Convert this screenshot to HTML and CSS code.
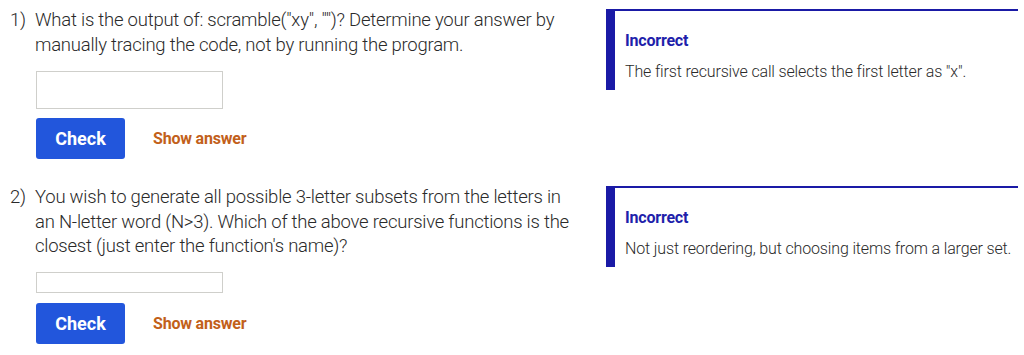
FILE: index.html
```html
<!DOCTYPE html>
<html>
<head>
<meta charset="utf-8">
<link rel="stylesheet" href="styles.css">
</head>
<body>
<div class="question q1">
  <div class="main">
    <div class="num">1)</div>
    <div class="content">
      <div class="prompt">What is the output of: scramble("xy", "")? Determine your answer by manually tracing the code, not by running the program.</div>
      <div class="answer tall"></div>
      <div class="actions">
        <button class="check">Check</button>
        <span class="show">Show answer</span>
      </div>
    </div>
  </div>
  <div class="feedback">
    <div class="fb-title">Incorrect</div>
    <div class="fb-text">The first recursive call selects the first letter as "x".</div>
  </div>
</div>
<div class="question q2">
  <div class="main">
    <div class="num">2)</div>
    <div class="content">
      <div class="prompt">You wish to generate all possible 3-letter subsets from the letters in an N-letter word (N&gt;3). Which of the above recursive functions is the closest (just enter the function's name)?</div>
      <div class="answer short"></div>
      <div class="actions">
        <button class="check">Check</button>
        <span class="show">Show answer</span>
      </div>
    </div>
  </div>
  <div class="feedback">
    <div class="fb-title">Incorrect</div>
    <div class="fb-text">Not just reordering, but choosing items from a larger set.</div>
  </div>
</div>
</body>
</html>
```

FILE: styles.css
```css
html, body {
  margin: 0;
  padding: 0;
  background: #ffffff;
}
body {
  font-family: Roboto, "Liberation Sans", sans-serif;
  color: #2a2a2a;
  padding: 8px 6px 0 10px;
}
.question {
  display: flex;
  align-items: flex-start;
}
.q2 {
  margin-top: 26px;
}
.main {
  display: flex;
  width: 596px;
  flex: none;
}
.num {
  width: 25px;
  flex: none;
  font-size: 18.5px;
  line-height: 24.5px;
  letter-spacing: -0.23px;
  font-weight: 300;
}
.content {
  width: 540px;
}
.prompt {
  font-size: 18.5px;
  line-height: 24.5px;
  letter-spacing: -0.23px;
  font-weight: 300;
}
.answer {
  margin-top: 14px;
  margin-left: 1px;
  width: 187px;
  border: 1px solid #cfcfcb;
  box-sizing: border-box;
  background: #fff;
}
.answer.tall {
  height: 38px;
}
.answer.short {
  height: 21px;
  margin-top: 13px;
}
.actions {
  display: flex;
  align-items: center;
  margin-top: 9px;
  margin-left: 1px;
}
.q2 .actions {
  margin-top: 10px;
}
.check {
  width: 89px;
  height: 41px;
  background: #2256dc;
  color: #fff;
  border: none;
  border-radius: 3px;
  font-family: Roboto, "Liberation Sans", sans-serif;
  font-weight: bold;
  font-size: 18px;
  padding: 0;
}
.show {
  margin-left: 28px;
  color: #c2601a;
  font-weight: bold;
  font-size: 16px;
  letter-spacing: -0.2px;
}
.feedback {
  margin-top: 1px;
  flex: 1;
  border-top: 2px solid #1a1aa6;
  border-left: 9px solid #1a1aa6;
  padding: 20px 2px 8px 10px;
}
.fb-title {
  color: #1f1fab;
  font-weight: bold;
  font-size: 16px;
  line-height: 20px;
  letter-spacing: -0.2px;
}
.fb-text {
  margin-top: 11px;
  font-size: 16px;
  line-height: 20px;
  letter-spacing: -0.15px;
  font-weight: 300;
  color: #2a2a2a;
}
```
